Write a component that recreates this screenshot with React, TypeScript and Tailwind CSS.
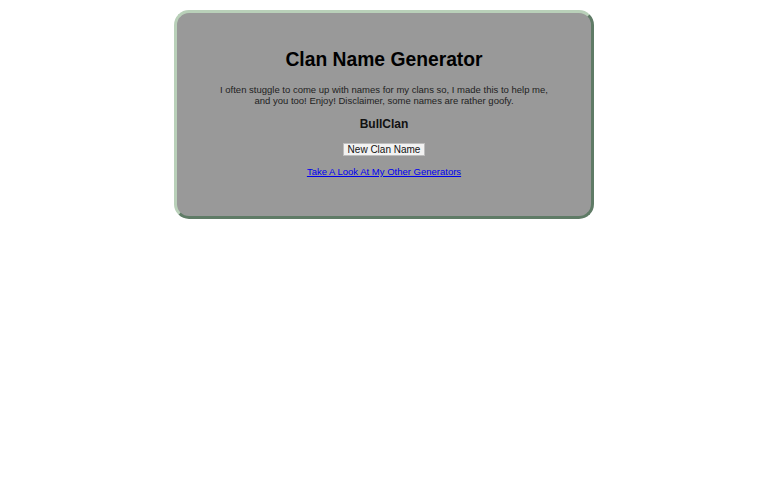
const App = () => {
  return (
    <div className="min-h-[480px] bg-white pt-[10px] font-['Liberation_Sans',Arial,sans-serif] text-black">
      <div className="mx-auto w-[420px] rounded-[15px] border-[3px] border-t-[#b9d0b9] border-l-[#b9d0b9] border-r-[#5f7b66] border-b-[#5f7b66] bg-[#999999] px-[20px] pt-[33px] pb-[38px] text-center">
        <h1 className="text-[19.3px] leading-[28px] font-bold">Clan Name Generator</h1>
        <p className="mx-auto mt-[10px] w-[340px] text-[9.5px] leading-[11px] text-[#222]">
          I often stuggle to come up with names for my clans so, I made this to help me,
          and you too! Enjoy! Disclaimer, some names are rather goofy.
        </p>
        <p className="mt-[11px] text-[12px] leading-[14px] font-bold text-[#111]">BullClan</p>
        <div className="mt-[12px] text-[10px] leading-[13px]">
          <button className="border border-[#bdbdbd] bg-[#f2f2f2] px-[4px] text-[10px] leading-[11px] text-[#111]">
            New Clan Name
          </button>
        </div>
        <div className="mt-[10px] text-[9.5px] leading-[12px]">
          <a href="#" className="text-[#0000ee] underline">
            Take A Look At My Other Generators
          </a>
        </div>
      </div>
    </div>
  )
}

export default App
